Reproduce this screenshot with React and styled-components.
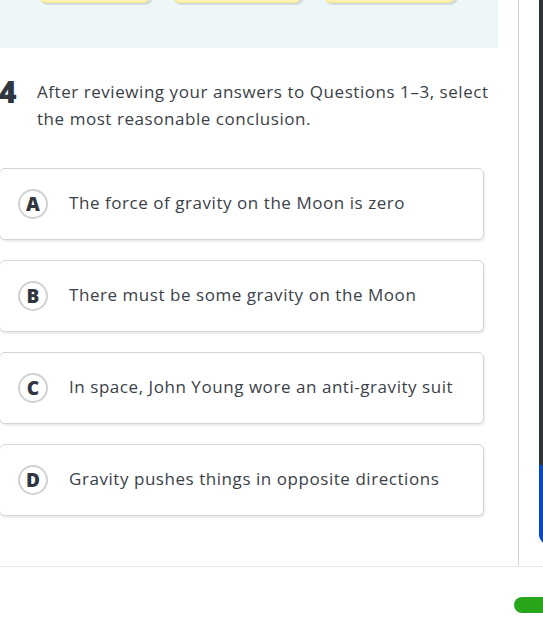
import styled, { createGlobalStyle } from 'styled-components';

const GlobalStyle = createGlobalStyle`
  html, body {
    margin: 0;
    padding: 0;
    background: #fff;
    overflow: hidden;
  }
  body {
    font-family: "Open Sans", "Noto Sans", Arial, sans-serif;
    color: #3b4149;
  }
`

const Page = styled.div`
  display: flex;
  flex-direction: column;
  width: 543px;
  height: 631px;
  overflow: hidden;
`

const Upper = styled.div`
  display: flex;
  height: 566px;
  flex-shrink: 0;
  border-bottom: 1px solid #e4e8eb;
`

const Main = styled.div`
  width: 518px;
  flex-shrink: 0;
  border-right: 1px solid #cdd3da;
  display: flex;
  flex-direction: column;
`

const TopPanel = styled.div`
  width: 498px;
  height: 48px;
  background: #eef7f7;
  flex-shrink: 0;
`

const CardRow = styled.div`
  display: flex;
  gap: 21px;
  padding-left: 38px;
  margin-top: -40px;
`

const Card = styled.div`
  width: ${p => p.w}px;
  height: 43px;
  background: #fff4b3;
  border: 1px solid #f9e48a;
  border-radius: 8px;
  box-sizing: border-box;
  box-shadow: 2px 2px 0 #d3dcdc;
`

const Question = styled.div`
  display: flex;
  margin-top: 30px;
`

const Number = styled.div`
  width: 38px;
  margin-left: -1px;
  font-size: 30px;
  font-weight: 800;
  line-height: 27px;
  color: #2f3640;
`

const Prompt = styled.p`
  margin: 0;
  font-size: 17px;
  letter-spacing: 0.55px;
  line-height: 27px;
  color: #3b4149;
  width: 470px;
`

const Options = styled.div`
  display: flex;
  flex-direction: column;
  gap: 20px;
  margin-top: 36px;
  margin-left: -1px;
`

const Option = styled.button`
  display: flex;
  align-items: center;
  gap: 21px;
  width: 485px;
  height: 72px;
  padding: 0 0 0 18px;
  box-sizing: border-box;
  background: #fff;
  border: 1px solid #d2d4d6;
  border-radius: 6px;
  box-shadow: 1px 2px 2px rgba(0, 0, 0, 0.08);
  font-family: inherit;
  text-align: left;
  cursor: pointer;
`

const Letter = styled.span`
  width: 30px;
  height: 30px;
  box-sizing: border-box;
  border: 2px solid #cfd1d3;
  border-radius: 50%;
  display: flex;
  align-items: center;
  justify-content: center;
  font-size: 19px;
  font-weight: 800;
  color: #2f3640;
  flex-shrink: 0;
`

const OptionText = styled.span`
  font-size: 17px;
  letter-spacing: 0.55px;
  color: #3b4149;
  margin-top: -3px;
`

const Side = styled.div`
  margin-left: 20px;
  width: 30px;
  flex-shrink: 0;
  display: flex;
  flex-direction: column;
  padding-bottom: 22px;
`

const SideDark = styled.div`
  flex: 1;
  background: #2d3339;
`

const SideBlue = styled.div`
  height: 79px;
  background: #0047cc;
  border-bottom-left-radius: 9px;
`

const Footer = styled.div`
  flex: 1;
  display: flex;
  justify-content: flex-end;
  padding-top: 30px;
`

const GoButton = styled.button`
  width: 40px;
  height: 16px;
  margin-right: -11px;
  border: none;
  border-radius: 8px;
  background: #28a71d;
  cursor: pointer;
`

const options = [
  { letter: 'A', text: 'The force of gravity on the Moon is zero' },
  { letter: 'B', text: 'There must be some gravity on the Moon' },
  { letter: 'C', text: 'In space, John Young wore an anti-gravity suit' },
  { letter: 'D', text: 'Gravity pushes things in opposite directions' },
]

const App = () => {
  return (
    <Page>
      <GlobalStyle />
      <Upper>
        <Main>
          <TopPanel>
            <CardRow>
              <Card w={113} />
              <Card w={130} />
              <Card w={133} />
            </CardRow>
          </TopPanel>
          <Question>
            <Number>4</Number>
            <Prompt>After reviewing your answers to Questions 1–3, select the most reasonable conclusion.</Prompt>
          </Question>
          <Options>
            {options.map(o => (
              <Option key={o.letter}>
                <Letter>{o.letter}</Letter>
                <OptionText>{o.text}</OptionText>
              </Option>
            ))}
          </Options>
        </Main>
        <Side>
          <SideDark />
          <SideBlue />
        </Side>
      </Upper>
      <Footer>
        <GoButton aria-label="Next" />
      </Footer>
    </Page>
  )
}

export default App
